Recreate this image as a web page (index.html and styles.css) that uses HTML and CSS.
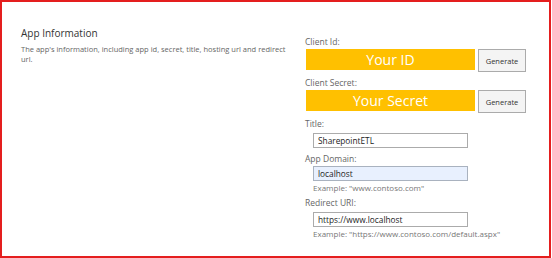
FILE: index.html
```html
<!DOCTYPE html>
<html>
<head>
	<title>App Information</title>
	<link rel="stylesheet" href="styles.css">
</head>
<body>
	<div class="frame">
		<div class="intro">
			<div class="intro-title">App Information</div>
			<div class="intro-text">The app's information, including app id, secret, title, hosting url and redirect url.</div>
		</div>
		<div class="fields">
			<div class="label">Client Id:</div>
			<div class="key-row">
				<div class="key">Your ID</div>
				<button class="gen">Generate</button>
			</div>
			<div class="label gap">Client Secret:</div>
			<div class="key-row">
				<div class="key">Your Secret</div>
				<button class="gen">Generate</button>
			</div>
			<div class="label gap">Title:</div>
			<input class="text-input" type="text" value="SharepointETL">
			<div class="label gap">App Domain:</div>
			<input class="text-input filled near" type="text" value="localhost">
			<div class="hint">Example: "www.contoso.com"</div>
			<div class="label">Redirect URI:</div>
			<input class="text-input" type="text" value="https://www.localhost">
			<div class="hint">Example: "https://www.contoso.com/default.aspx"</div>
		</div>
	</div>
</body>
</html>
```

FILE: styles.css
```css
body {
	margin: 0;
	font-family: "Open Sans", Arial, sans-serif;
	background: #fff;
}

.frame {
	display: flex;
	width: 551px;
	height: 258px;
	box-sizing: border-box;
	border: 2px solid #e41e1e;
}

.intro {
	width: 288px;
	padding: 24px 0 0 19px;
	box-sizing: border-box;
	flex: none;
}

.intro-title {
	font-size: 10px;
	color: #333;
	line-height: 14px;
}

.intro-text {
	margin-top: 4px;
	font-size: 7.5px;
	line-height: 10px;
	color: #666;
}

.fields {
	padding: 34px 0 0 15px;
	display: flex;
	flex-direction: column;
	align-items: flex-start;
}

.label {
	font-size: 8.5px;
	line-height: 12px;
	color: #666;
	margin-top: 4px;
}

.label.gap {
	margin-top: 5px;
}

.fields .label:first-child {
	margin-top: 0;
}

.key-row {
	display: flex;
	align-items: flex-start;
	margin: 1px 0 0 1px;
}

.key {
	width: 169px;
	height: 21px;
	background: #ffc000;
	color: #fff;
	font-size: 14px;
	line-height: 21px;
	text-align: center;
}

.gen {
	margin-left: 3px;
	width: 48px;
	height: 23px;
	padding: 0;
	background: #f4f4f4;
	border: 1px solid #ababab;
	font-family: inherit;
	font-size: 7.5px;
	color: #333;
}

.text-input {
	margin: 3px 0 0 8px;
	width: 155px;
	height: 15px;
	box-sizing: border-box;
	border: 1px solid #ababab;
	padding: 0 4px;
	font-family: inherit;
	font-size: 8.3px;
	color: #222;
	outline: none;
}

.text-input.near {
	margin-top: 1px;
}

.text-input.filled {
	background: #e8f0fe;
	border-color: #a9b2bf;
}

.hint {
	margin: 1px 0 0 8px;
	font-size: 8px;
	line-height: 11px;
	color: #777;
}
```
